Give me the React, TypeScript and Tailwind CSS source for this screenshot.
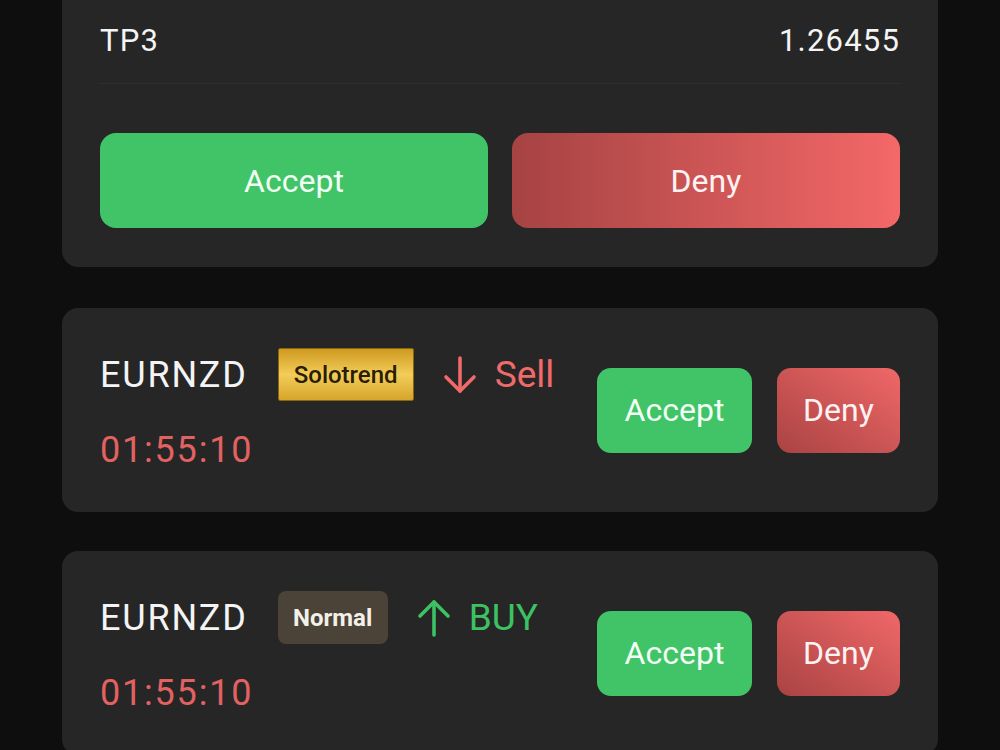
import React from 'react';

function ArrowIcon({ up, color }: { up?: boolean; color: string }) {
  return (
    <svg width="34" height="38" viewBox="0 0 34 38" fill="none" stroke={color} strokeWidth="3.6" strokeLinecap="round" strokeLinejoin="round">
      {up ? (
        <>
          <path d="M17 36V3" />
          <path d="M3 17L17 3l14 14" />
        </>
      ) : (
        <>
          <path d="M17 2v33" />
          <path d="M3 21l14 14 14-14" />
        </>
      )}
    </svg>
  );
}

function SignalCard({ badge, side, className }: { badge: 'solo' | 'normal'; side: 'sell' | 'buy'; className?: string }) {
  return (
    <div className={`flex h-[204px] shrink-0 items-center justify-between rounded-[16px] bg-[#262626] px-[38px] ${className ?? ''}`}>
      <div className="flex flex-col pb-[2px]">
        <div className="flex h-[53px] items-center">
          <span className="text-[36px] leading-none tracking-[1.8px] text-[#f4f4f4]">EURNZD</span>
          {badge === 'solo' ? (
            <span className="ml-[30px] flex h-[53px] w-[136px] items-center justify-center rounded-[2px] border border-[#8a6612] bg-gradient-to-b from-[#cf9a1c] via-[#f2cd58] to-[#d6a52a] text-[24px] font-medium text-[#2a1d05]">
              Solotrend
            </span>
          ) : (
            <span className="ml-[30px] flex h-[53px] w-[110px] items-center justify-center rounded-[8px] bg-[#4b4337] text-[24px] font-bold text-[#f3f0ea]">
              Normal
            </span>
          )}
          <span className="ml-[29px] flex items-center">
            <ArrowIcon up={side === 'buy'} color={side === 'buy' ? '#3cc263' : '#f06a6a'} />
            <span
              className={`ml-[18px] text-[37px] leading-none ${side === 'buy' ? 'text-[#3cc263]' : 'text-[#f06a6a]'}`}
            >
              {side === 'buy' ? 'BUY' : 'Sell'}
            </span>
          </span>
        </div>
        <span className="mt-[29px] text-[36px] leading-[40px] tracking-[1.8px] text-[#e26262]">01:55:10</span>
      </div>
      <div className="flex gap-[25px]">
        <button className="h-[85px] w-[155px] rounded-[14px] bg-[#41c468] text-[32px] text-[#f2fff4]">Accept</button>
        <button className="h-[85px] w-[123px] rounded-[14px] bg-gradient-to-tr from-[#aa4343] to-[#f06868] text-[32px] text-[#fff2f2]">
          Deny
        </button>
      </div>
    </div>
  );
}

export default function App() {
  return (
    <div
      className="flex h-[750px] w-full flex-col overflow-hidden bg-[#0e0e0e] px-[62px]"
      style={{ fontFamily: 'Roboto, "Noto Sans", sans-serif' }}
    >
      <div className="shrink-0 rounded-b-[16px] bg-[#262626] px-[38px] pb-[39px]">
        <div className="flex h-[83px] items-center justify-between text-[31px] tracking-[1.2px] text-[#f4f4f4]">
          <span>TP3</span>
          <span>1.26455</span>
        </div>
        <div className="h-px bg-[#2f2f2f]" />
        <div className="mt-[49px] flex gap-[24px]">
          <button className="h-[95px] flex-1 rounded-[16px] bg-[#41c468] text-[32px] text-[#f2fff4]">Accept</button>
          <button className="h-[95px] flex-1 rounded-[16px] bg-gradient-to-r from-[#a64343] to-[#f46868] text-[32px] text-[#fff2f2]">
            Deny
          </button>
        </div>
      </div>
      <SignalCard badge="solo" side="sell" className="mt-[41px]" />
      <SignalCard badge="normal" side="buy" className="mt-[39px]" />
    </div>
  );
}
